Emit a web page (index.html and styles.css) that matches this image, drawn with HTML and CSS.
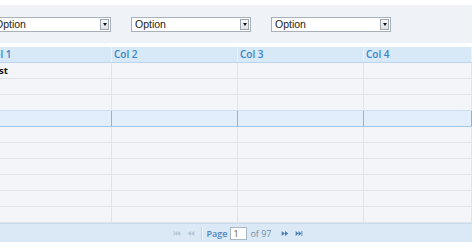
FILE: index.html
```html
<!DOCTYPE html>
<html lang="en">
<head>
  <meta charset="UTF-8">
  <meta name="viewport" content="width=device-width, initial-scale=1.0">
  <title>Grid</title>
  <link rel="stylesheet" href="styles.css">
</head>
<body>
  <div class="page">
    <div class="filter-bar">
      <div class="select"><span>Option</span><span class="select-btn"></span></div>
      <div class="select"><span>Option</span><span class="select-btn"></span></div>
      <div class="select"><span>Option</span><span class="select-btn"></span></div>
    </div>

    <div class="grid">
      <div class="grid-row grid-head">
        <div class="cell">Col 1</div>
        <div class="cell">Col 2</div>
        <div class="cell">Col 3</div>
        <div class="cell">Col 4</div>
      </div>
      <div class="grid-row"><div class="cell strong">Test</div><div class="cell"></div><div class="cell"></div><div class="cell"></div></div>
      <div class="grid-row"><div class="cell"></div><div class="cell"></div><div class="cell"></div><div class="cell"></div></div>
      <div class="grid-row"><div class="cell"></div><div class="cell"></div><div class="cell"></div><div class="cell"></div></div>
      <div class="grid-row selected"><div class="cell"></div><div class="cell"></div><div class="cell"></div><div class="cell"></div></div>
      <div class="grid-row"><div class="cell"></div><div class="cell"></div><div class="cell"></div><div class="cell"></div></div>
      <div class="grid-row"><div class="cell"></div><div class="cell"></div><div class="cell"></div><div class="cell"></div></div>
      <div class="grid-row"><div class="cell"></div><div class="cell"></div><div class="cell"></div><div class="cell"></div></div>
      <div class="grid-row"><div class="cell"></div><div class="cell"></div><div class="cell"></div><div class="cell"></div></div>
      <div class="grid-row"><div class="cell"></div><div class="cell"></div><div class="cell"></div><div class="cell"></div></div>
      <div class="grid-row"><div class="cell"></div><div class="cell"></div><div class="cell"></div><div class="cell"></div></div>

      <div class="pager">
        <svg class="pg-icon off" width="8" height="5" viewBox="0 0 8 6"><rect x="0" y="0" width="1" height="6"/><path d="M1 3 L4.5 0 V6 Z M4.5 3 L8 0 V6 Z"/></svg>
        <svg class="pg-icon off" width="8" height="5" viewBox="0 0 8 6"><path d="M0 3 L4 0 V6 Z M4 3 L8 0 V6 Z"/></svg>
        <span class="pg-sep"></span>
        <span class="pg-label">Page</span>
        <span class="pg-input">1</span>
        <span class="pg-total">of 97</span>
        <svg class="pg-icon" width="8" height="5" viewBox="0 0 8 6"><path d="M0 0 L4 3 L0 6 Z M4 0 L8 3 L4 6 Z"/></svg>
        <svg class="pg-icon" width="8" height="5" viewBox="0 0 8 6"><path d="M0 0 L3.5 3 L0 6 Z M3.5 0 L7 3 L3.5 6 Z"/><rect x="7" y="0" width="1" height="6"/></svg>
      </div>
    </div>
  </div>
</body>
</html>
```

FILE: styles.css
```css
* {
  margin: 0;
  padding: 0;
  box-sizing: border-box;
}

body {
  font-family: "Open Sans", "Liberation Sans", sans-serif;
  background: white;
  overflow: hidden;
}

.page {
  width: 486px;
  margin-left: -14px;
  padding-top: 5px;
}

/* Barra de filtros */
.filter-bar {
  height: 38px;
  background: #eff2f7;
  display: flex;
  align-items: center;
  gap: 20px;
  padding-left: 5px;
}

.select {
  width: 120px;
  height: 15px;
  background: white;
  border: 1px solid #a8b0b9;
  display: flex;
  align-items: center;
  justify-content: space-between;
  padding: 0 1px 0 3px;
  font-family: "Liberation Sans", Arial, sans-serif;
  font-size: 10.5px;
  color: #222;
}

.select-btn {
  width: 9px;
  height: 11px;
  border: 1px solid #9ea6ae;
  background: linear-gradient(#f6f7f8, #dfe2e5);
  display: flex;
  align-items: center;
  justify-content: center;
}

.select-btn::after {
  content: '';
  border-left: 2.5px solid transparent;
  border-right: 2.5px solid transparent;
  border-top: 3px solid #111;
}

/* Tabla */
.grid {
  margin-top: 4px;
}

.grid-row {
  display: grid;
  grid-template-columns: 126px 126px 126px 1fr;
  height: 16px;
  background: #f3f5f8;
  border-bottom: 1px solid #e0e3e7;
}

.cell {
  border-right: 1px solid #e0e3e7;
  padding-left: 2px;
  font-size: 9.5px;
  line-height: 15px;
  color: #111;
  overflow: hidden;
  white-space: nowrap;
}

.cell.strong {
  font-weight: 700;
}

.grid-head {
  background: #d7e8f7;
  border-bottom: 1px solid #bcd5ec;
}

.grid-head .cell {
  color: #3a86c4;
  font-weight: 600;
  font-size: 10px;
  line-height: 15px;
  border-right-color: #eaf3fb;
}

.grid-row.selected {
  background: #e2eefb;
  border-top: 1px solid #c9def2;
  border-bottom: 1px solid #a3c6e6;
  margin-top: -1px;
  height: 17px;
}

.grid-row.selected .cell {
  border-right-color: #8ab5dc;
}

/* Paginador */
.pager {
  height: 19px;
  background: #dbe9f6;
  border-top: 1px solid #c6dbee;
  display: flex;
  align-items: center;
  justify-content: center;
  padding-left: 18px;
  font-size: 9px;
}

.pg-icon {
  fill: #4a80b2;
  margin: 0 3px;
}

.pg-icon.off {
  fill: #b3c4d5;
}

.pg-sep {
  width: 1px;
  height: 13px;
  background: #c2d5e7;
  margin: 0 3px 0 3px;
  box-shadow: 1px 0 0 #f1f7fc;
}

.pg-label {
  color: #4b87bf;
  font-weight: 600;
  margin-left: 1px;
}

.pg-input {
  width: 17px;
  height: 13px;
  background: white;
  border: 1px solid #a9b8c6;
  margin: 0 3px 0 3px;
  padding-left: 2px;
  line-height: 11px;
  color: #6b5a1c;
}

.pg-total {
  color: #6e8aa6;
  margin-right: 6px;
}
```
